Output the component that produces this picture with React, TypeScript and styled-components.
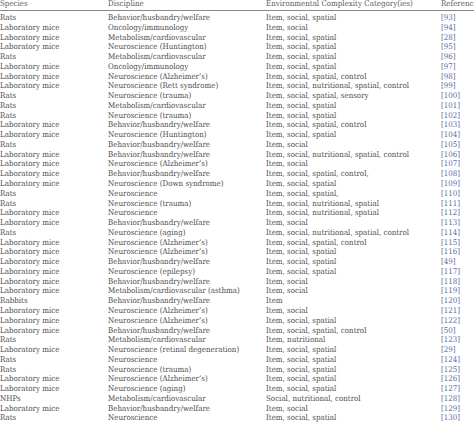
import React, { FC } from 'react';
import styled, { createGlobalStyle } from 'styled-components';

const GlobalStyle = createGlobalStyle`
  html, body {
    margin: 0;
    padding: 0;
    background: #ffffff;
    overflow: hidden;
  }
`;

const COLUMNS = '108px 158px 175px 1fr';

const Table = styled.div`
  width: 474px;
  margin-top: -2px;
  font-family: 'DejaVu Serif Condensed', 'DejaVu Serif', serif;
  font-stretch: condensed;
  font-size: 7.9px;
  color: #4d4d4d;
`;

const HeadRow = styled.div`
  display: grid;
  grid-template-columns: ${COLUMNS};
  height: 12px;
  line-height: 11px;
  border-bottom: 1.5px solid #8a8a8a;
  color: #5a5a5a;
  margin-bottom: 2px;
`;

const Row = styled.div`
  display: grid;
  grid-template-columns: ${COLUMNS};
  height: 9.77px;
  line-height: 9.77px;
  white-space: nowrap;
`;

const Cell = styled.div<{ $ref?: boolean }>`
  overflow: visible;
  color: ${(p) => (p.$ref ? '#5d6aa6' : 'inherit')};
`;

type Entry = [string, string, string, number];

const rows: Entry[] = [
  ['Rats', 'Behavior/husbandry/welfare', 'Item, social, spatial', 93],
  ['Laboratory mice', 'Oncology/immunology', 'Item, social', 94],
  ['Laboratory mice', 'Metabolism/cardiovascular', 'Item, social, spatial', 28],
  ['Laboratory mice', 'Neuroscience (Huntington)', 'Item, social, spatial', 95],
  ['Rats', 'Metabolism/cardiovascular', 'Item, social, spatial', 96],
  ['Laboratory mice', 'Oncology/immunology', 'Item, social, spatial', 97],
  ['Laboratory mice', 'Neuroscience (Alzheimer’s)', 'Item, social, spatial, control', 98],
  ['Laboratory mice', 'Neuroscience (Rett syndrome)', 'Item, social, nutritional, spatial, control', 99],
  ['Rats', 'Neuroscience (trauma)', 'Item, social, spatial, sensory', 100],
  ['Rats', 'Metabolism/cardiovascular', 'Item, social, spatial', 101],
  ['Rats', 'Neuroscience (trauma)', 'Item, social, spatial', 102],
  ['Laboratory mice', 'Behavior/husbandry/welfare', 'Item, social, spatial, control', 103],
  ['Laboratory mice', 'Neuroscience (Huntington)', 'Item, social, spatial', 104],
  ['Rats', 'Behavior/husbandry/welfare', 'Item, social', 105],
  ['Laboratory mice', 'Behavior/husbandry/welfare', 'Item, social, nutritional, spatial, control', 106],
  ['Laboratory mice', 'Neuroscience (Alzheimer’s)', 'Item, social', 107],
  ['Laboratory mice', 'Behavior/husbandry/welfare', 'Item, social, spatial, control,', 108],
  ['Laboratory mice', 'Neuroscience (Down syndrome)', 'Item, social, spatial', 109],
  ['Rats', 'Neuroscience', 'Item, social, spatial,', 110],
  ['Rats', 'Neuroscience (trauma)', 'Item, social, nutritional, spatial', 111],
  ['Laboratory mice', 'Neuroscience', 'Item, social, nutritional, spatial', 112],
  ['Laboratory mice', 'Behavior/husbandry/welfare', 'Item, social', 113],
  ['Rats', 'Neuroscience (aging)', 'Item, social, nutritional, spatial, control', 114],
  ['Laboratory mice', 'Neuroscience (Alzheimer’s)', 'Item, social, spatial, control', 115],
  ['Laboratory mice', 'Neuroscience (Alzheimer’s)', 'Item, social, spatial', 116],
  ['Laboratory mice', 'Behavior/husbandry/welfare', 'Item, social, spatial', 49],
  ['Laboratory mice', 'Neuroscience (epilepsy)', 'Item, social, spatial', 117],
  ['Laboratory mice', 'Behavior/husbandry/welfare', 'Item, social', 118],
  ['Laboratory mice', 'Metabolism/cardiovascular (asthma)', 'Item, social', 119],
  ['Rabbits', 'Behavior/husbandry/welfare', 'Item', 120],
  ['Laboratory mice', 'Neuroscience (Alzheimer’s)', 'Item, social', 121],
  ['Laboratory mice', 'Neuroscience (Alzheimer’s)', 'Item, social, spatial', 122],
  ['Laboratory mice', 'Behavior/husbandry/welfare', 'Item, social, spatial, control', 50],
  ['Rats', 'Metabolism/cardiovascular', 'Item, nutritional', 123],
  ['Laboratory mice', 'Neuroscience (retinal degeneration)', 'Item, social, spatial', 29],
  ['Rats', 'Neuroscience', 'Item, social, spatial', 124],
  ['Rats', 'Neuroscience (trauma)', 'Item, social, spatial', 125],
  ['Laboratory mice', 'Neuroscience (Alzheimer’s)', 'Item, social, spatial', 126],
  ['Laboratory mice', 'Neuroscience (aging)', 'Item, social, spatial', 127],
  ['NHPs', 'Metabolism/cardiovascular', 'Social, nutritional, control', 128],
  ['Laboratory mice', 'Behavior/husbandry/welfare', 'Item, social', 129],
  ['Rats', 'Neuroscience', 'Item, social, spatial', 130],
];

const App: FC = () => (
  <>
    <GlobalStyle />
    <Table>
      <HeadRow>
        <Cell>Species</Cell>
        <Cell>Discipline</Cell>
        <Cell>Environmental Complexity Category(ies)</Cell>
        <Cell>Reference</Cell>
      </HeadRow>
      {rows.map(([species, discipline, category, ref], i) => (
        <Row key={i}>
          <Cell>{species}</Cell>
          <Cell>{discipline}</Cell>
          <Cell>{category}</Cell>
          <Cell $ref>[{ref}]</Cell>
        </Row>
      ))}
    </Table>
  </>
);

export default App;
